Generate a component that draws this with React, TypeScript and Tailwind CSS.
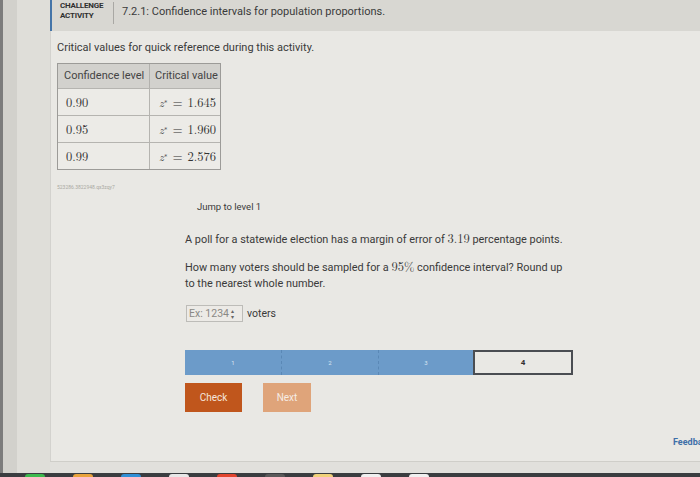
import React from "react";

const sans = { fontFamily: "Roboto, 'Liberation Sans', sans-serif" } as React.CSSProperties;
const serif = { fontFamily: "'Latin Modern Roman', 'DejaVu Serif', 'Liberation Serif', serif" } as React.CSSProperties;

function Z({ v }: { v: string }) {
  return (
    <span style={serif} className="text-[12.5px] text-[#333] leading-[14px]">
      <i className="text-[11.5px]">z</i>
      <sup className="text-[8px] relative -top-[1px]">*</sup>
      <span className="mx-[5px]">=</span>
      {v}
    </span>
  );
}

export default function App() {
  const rows = [
    ["0.90", "1.645"],
    ["0.95", "1.960"],
    ["0.99", "2.576"],
  ];
  return (
    <div style={sans} className="w-[700px] h-[477px] overflow-hidden bg-[#3a3a3a] flex flex-col relative">
      <div className="flex h-[473px]">
        <div className="w-[3px] bg-[#7c7c7c]" />
        <div className="w-[14px] bg-[#d2d1cc]" />
        <div className="w-[33px] bg-[#dfded9]" />
        <div className="flex-1 flex flex-col bg-[#e1e0dc]">
          <div className="h-[462px] flex flex-col border-b border-[#cfcec9]">
            {/* header */}
            <div className="h-[31px] shrink-0 flex items-start pt-[1px] bg-[#d8d7d2] border-l-[2px] border-[#4474a8]">
              <div className="ml-[8px] w-[53px] text-[8px] leading-[10px] font-bold text-[#2f2f2f] tracking-tight">
                <div>CHALLENGE</div>
                <div>ACTIVITY</div>
              </div>
              <div className="w-[1px] h-[22px] mt-[1px] bg-[#a9a8a4]" />
              <div className="ml-[8px] mt-[4px] text-[11px] leading-[14px] text-[#3a3a3a]">7.2.1: Confidence intervals for population proportions.</div>
            </div>
            {/* body */}
            <div className="flex-1 flex flex-col bg-[#e9e8e4] border-l border-[#d3d2ce] pl-[6px] pt-[10px]">
              <div className="text-[11px] text-[#3a3a3a] leading-[14px]">Critical values for quick reference during this activity.</div>
              <div className="mt-[8px] w-[164px] border border-[#9c9b98] flex flex-col">
                <div className="h-[24px] flex bg-[#d2d1cd] text-[11px] text-[#444]">
                  <div className="w-[92px] border-r border-[#b2b1ad] flex items-center pl-[6px]">Confidence level</div>
                  <div className="flex-1 flex items-center pl-[5px]">Critical value</div>
                </div>
                {rows.map(([a, b]) => (
                  <div key={a} className="h-[27px] flex bg-[#ecebe7] border-t border-[#b5b4b0]">
                    <div style={serif} className="w-[92px] border-r border-[#b5b4b0] flex items-center pl-[8px] text-[12.5px] text-[#333]">{a}</div>
                    <div className="flex-1 flex items-center justify-end pr-[4px]"><Z v={b} /></div>
                  </div>
                ))}
              </div>
              <div className="mt-[14px] text-[5px] text-[#a9a8a3] leading-[6px]">523286.3822948.qx3zqy7</div>
              <div className="ml-[128px] flex flex-col">
                <div className="mt-[11px] ml-[12px] text-[9.5px] text-[#3a3a3a] leading-[12px]">Jump to level 1</div>
                <div className="mt-[18px] text-[10.9px] text-[#3a3a3a] leading-[14px]">
                  A poll for a statewide election has a margin of error of <span style={serif} className="text-[12.5px] leading-[14px]">3.19</span> percentage points.
                </div>
                <div className="mt-[12px] w-[384px] text-[10.9px] text-[#3a3a3a] leading-[16px]">
                  How many voters should be sampled for a <span style={serif} className="text-[12.5px] leading-[14px]">95%</span> confidence interval? Round up to the nearest whole number.
                </div>
                <div className="mt-[13px] flex items-center">
                  <div className="ml-[1px] w-[57px] h-[17px] border border-[#bdbcb8] bg-[#eceae6] flex items-center pl-[2px] text-[10.5px] text-[#8a8985]">
                    Ex: 1234
                    <span className="ml-[2px] text-[6px] leading-[6px] text-[#666] flex flex-col">
                      <span>▴</span>
                      <span>▾</span>
                    </span>
                  </div>
                  <div className="ml-[4px] text-[10.5px] text-[#3a3a3a]">voters</div>
                </div>
                <div className="mt-[28px] w-[388px] h-[25px] flex">
                  <div className="w-[97px] bg-[#6c9bc9] flex items-center justify-center text-[6px] text-[#d8e4f0] border-r border-dashed border-[#5a88b6]">1</div>
                  <div className="w-[97px] bg-[#6c9bc9] flex items-center justify-center text-[6px] text-[#d8e4f0] border-r border-dashed border-[#5a88b6]">2</div>
                  <div className="w-[94px] bg-[#6c9bc9] flex items-center justify-center text-[6px] text-[#d8e4f0]">3</div>
                  <div className="flex-1 border-[2px] border-[#4a4d52] bg-[#e9e8e4] flex items-center justify-center text-[8px] font-bold text-[#333]">4</div>
                </div>
                <div className="mt-[8px] flex">
                  <div className="w-[57px] h-[29px] bg-[#c0561c] flex items-center justify-center text-[10px] text-[#f5e6dc]">Check</div>
                  <div className="ml-[21px] w-[48px] h-[29px] bg-[#dfa47a] flex items-center justify-center text-[10px] text-[#f6ece4]">Next</div>
                </div>
              </div>
            </div>
          </div>
        </div>
      </div>
      <div className="absolute left-[673px] top-[436px] text-[9px] font-bold text-[#3f6fa8]">Feedback</div>
      <div className="flex-1 flex items-end gap-[28px] pl-[25px] bg-[#3a3d40]">
        <div className="w-[20px] h-[3px] bg-[#3dba4e] rounded-t" />
        <div className="w-[20px] h-[3px] bg-[#e9a33b] rounded-t" />
        <div className="w-[20px] h-[3px] bg-[#2f8fd6] rounded-t" />
        <div className="w-[20px] h-[3px] bg-[#e8e8e8] rounded-t" />
        <div className="w-[20px] h-[3px] bg-[#e2452f] rounded-t" />
        <div className="w-[20px] h-[3px] bg-[#5a5a5a] rounded-t" />
        <div className="w-[20px] h-[3px] bg-[#f1d27a] rounded-t" />
        <div className="w-[20px] h-[3px] bg-[#f0f0f0] rounded-t" />
        <div className="w-[20px] h-[3px] bg-[#f0f0f0] rounded-t" />
      </div>
    </div>
  );
}
